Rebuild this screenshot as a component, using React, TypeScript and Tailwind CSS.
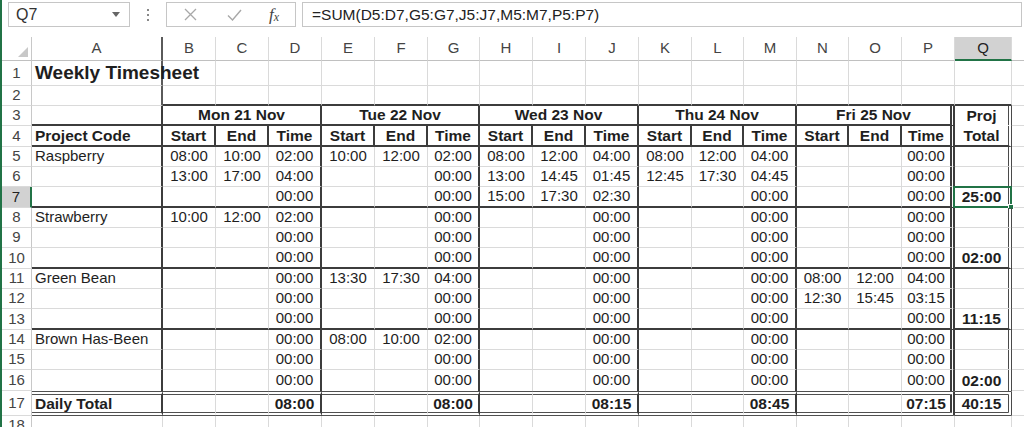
import React from "react";

const colW = [
  "w-[131px]",
  "w-[53px]",
  "w-[53px]",
  "w-[53px]",
  "w-[53px]",
  "w-[53px]",
  "w-[52px]",
  "w-[53px]",
  "w-[53px]",
  "w-[53px]",
  "w-[53px]",
  "w-[52px]",
  "w-[53px]",
  "w-[52px]",
  "w-[53px]",
  "w-[53px]",
  "w-[57px]",
];

const letters = ["A", "B", "C", "D", "E", "F", "G", "H", "I", "J", "K", "L", "M", "N", "O", "P", "Q"];

const rowH: Record<number, string> = {
  1: "h-[25px]",
  2: "h-[20px]",
  3: "h-[20px]",
  4: "h-[21px]",
  5: "h-[20px]",
  6: "h-[20px]",
  7: "h-[21px]",
  8: "h-[20px]",
  9: "h-[20px]",
  10: "h-[21px]",
  11: "h-[20px]",
  12: "h-[20px]",
  13: "h-[21px]",
  14: "h-[20px]",
  15: "h-[20px]",
  16: "h-[21px]",
  17: "h-[25px]",
  18: "h-[20px]",
};

const E = "";
const Z = "00:00";

const data: Record<number, string[]> = {
  1: ["Weekly Timesheet", E, E, E, E, E, E, E, E, E, E, E, E, E, E, E, E],
  2: Array(17).fill(E),
  4: ["Project Code", "Start", "End", "Time", "Start", "End", "Time", "Start", "End", "Time", "Start", "End", "Time", "Start", "End", "Time", "Total"],
  5: ["Raspberry", "08:00", "10:00", "02:00", "10:00", "12:00", "02:00", "08:00", "12:00", "04:00", "08:00", "12:00", "04:00", E, E, Z, E],
  6: [E, "13:00", "17:00", "04:00", E, E, Z, "13:00", "14:45", "01:45", "12:45", "17:30", "04:45", E, E, Z, E],
  7: [E, E, E, Z, E, E, Z, "15:00", "17:30", "02:30", E, E, Z, E, E, Z, "25:00"],
  8: ["Strawberry", "10:00", "12:00", "02:00", E, E, Z, E, E, Z, E, E, Z, E, E, Z, E],
  9: [E, E, E, Z, E, E, Z, E, E, Z, E, E, Z, E, E, Z, E],
  10: [E, E, E, Z, E, E, Z, E, E, Z, E, E, Z, E, E, Z, "02:00"],
  11: ["Green Bean", E, E, Z, "13:30", "17:30", "04:00", E, E, Z, E, E, Z, "08:00", "12:00", "04:00", E],
  12: [E, E, E, Z, E, E, Z, E, E, Z, E, E, Z, "12:30", "15:45", "03:15", E],
  13: [E, E, E, Z, E, E, Z, E, E, Z, E, E, Z, E, E, Z, "11:15"],
  14: ["Brown Has-Been", E, E, Z, "08:00", "10:00", "02:00", E, E, Z, E, E, Z, E, E, Z, E],
  15: [E, E, E, Z, E, E, Z, E, E, Z, E, E, Z, E, E, Z, E],
  16: [E, E, E, Z, E, E, Z, E, E, Z, E, E, Z, E, E, Z, "02:00"],
  17: ["Daily Total", E, E, "08:00", E, E, "08:00", E, E, "08:15", E, E, "08:45", E, E, "07:15", "40:15"],
  18: Array(17).fill(E),
};

const GR = "border-r border-r-[#dadada]";
const DR = "border-r-2 border-r-[#3c3c3c]";
const FR = "border-r-2 border-r-[#5a5a5a]";
const PR = "border-r-[5px] [border-right-style:double] border-r-[#3c3c3c]";
const QR = "border-r-[4px] [border-right-style:double] border-r-[#4a4a4a]";

const GB = "border-b border-b-[#dadada]";
const DB = "border-b-2 border-b-[#3c3c3c]";
const WB = "border-b border-b-white";
const NB = "border-b-0";
const DBL =
  "border-t-4 [border-top-style:double] border-t-[#505050] border-b-4 [border-bottom-style:double] border-b-[#505050]";

function rightCls(r: number, c: number): string {
  if (r === 1 || r === 2) return c === 0 ? FR : GR;
  if (r === 18) return GR;
  if (c === 0) return DR;
  if (c === 3 || c === 6 || c === 9 || c === 12) return DR;
  if (c === 15) return PR;
  if (c === 16) return QR;
  if (r === 4) return DR;
  return GR;
}

function bottomCls(r: number, c: number): string {
  if (r === 2) return c >= 1 ? DB : GB;
  if (r === 3) return c === 16 ? WB : DB;
  if (r === 4) return DB;
  if (r === 7 || r === 10 || r === 13) return DB;
  if (r === 16) return NB;
  if (r === 17) return DBL;
  return GB;
}

function RowHeader({ r }: { r: number }) {
  const sel = r === 7;
  return (
    <div
      className={
        "w-[30px] shrink-0 flex items-center justify-center text-[15px] border-b border-b-[#dadada] " +
        (sel
          ? "bg-[#d2d2d2] border-r-2 border-r-[#217346] text-[#222]"
          : "bg-white border-r border-r-[#c8c8c8] text-[#444]")
      }
    >
      {r}
    </div>
  );
}

function Selection() {
  return (
    <div className="pointer-events-none absolute -left-[2px] -top-[1px] -right-[4px] -bottom-[2px] border-2 border-[#217346]">
      <div className="absolute -right-[4px] -bottom-[4px] w-[6px] h-[6px] bg-[#217346] border border-white" />
    </div>
  );
}

function DataRow({ r }: { r: number }) {
  const row = data[r];
  const bold = r === 1 || r === 4 || r === 17;
  return (
    <div className={"flex " + rowH[r]}>
      <RowHeader r={r} />
      {row.map((v, c) => {
        const isA = c === 0;
        const b = bold || (c === 16 && v !== "");
        const size = r === 1 ? "text-[19px]" : b ? "text-[15.5px]" : "text-[15px]";
        return (
          <div
            key={c}
            className={
              "shrink-0 relative flex items-center px-[3px] whitespace-nowrap text-[#1e1e1e] " +
              colW[c] +
              " " +
              rightCls(r, c) +
              " " +
              bottomCls(r, c) +
              " " +
              (isA ? "justify-start " : "justify-center ") +
              size +
              (b ? " font-bold" : "")
            }
          >
            <span className={isA && r === 1 ? "relative z-10" : ""}>{v}</span>
            {r === 7 && c === 16 ? <Selection /> : null}
          </div>
        );
      })}
      <div className={"flex-1 " + GB} />
    </div>
  );
}

function HeaderRow3() {
  const groups = [
    { label: "Mon 21 Nov", w: "w-[159px]", r: DR },
    { label: "Tue 22 Nov", w: "w-[158px]", r: DR },
    { label: "Wed 23 Nov", w: "w-[159px]", r: DR },
    { label: "Thu 24 Nov", w: "w-[158px]", r: DR },
    { label: "Fri 25 Nov", w: "w-[158px]", r: PR },
  ];
  return (
    <div className={"flex " + rowH[3]}>
      <RowHeader r={3} />
      <div className={"shrink-0 w-[131px] " + DR + " " + DB} />
      {groups.map((g) => (
        <div
          key={g.label}
          className={
            "shrink-0 flex items-center justify-center text-[15.5px] font-bold text-[#1e1e1e] whitespace-nowrap " +
            g.w +
            " " +
            g.r +
            " " +
            DB
          }
        >
          {g.label}
        </div>
      ))}
      <div
        className={
          "shrink-0 w-[57px] flex items-center justify-center text-[15.5px] font-bold text-[#1e1e1e] " + QR + " " + WB
        }
      >
        Proj
      </div>
      <div className={"flex-1 " + GB} />
    </div>
  );
}

function ColumnHeader() {
  return (
    <div className="flex h-[24px]">
      <div className="w-[30px] shrink-0 flex items-end justify-end pr-[3px] pb-[3px] border-r border-r-[#c8c8c8] border-b border-b-[#c0c0c0]">
        <svg width="10" height="10" viewBox="0 0 10 10">
          <polygon points="10,0 10,10 0,10" fill="#c8c8c8" />
        </svg>
      </div>
      {letters.map((l, c) => {
        const sel = c === 16;
        return (
          <div
            key={l}
            className={
              "shrink-0 flex items-center justify-center text-[15px] " +
              colW[c] +
              " " +
              (c === 0 ? FR : "border-r border-r-[#dadada]") +
              " " +
              (sel
                ? "bg-[#d2d2d2] border-b-2 border-b-[#217346] text-[#222]"
                : "bg-white border-b border-b-[#c0c0c0] text-[#444]")
            }
          >
            {l}
          </div>
        );
      })}
      <div className="flex-1 border-b border-b-[#c0c0c0]" />
    </div>
  );
}

function FormulaBar() {
  return (
    <div className="flex items-start pt-[2px] h-[37px]">
      <div className="ml-[6px] w-[122px] h-[25px] border border-[#c6c6c6] flex items-center justify-between pl-[7px] pr-[9px] text-[16px] text-[#333]">
        <span>Q7</span>
        <svg width="8" height="5" viewBox="0 0 8 5">
          <polygon points="0,0 8,0 4,5" fill="#666" />
        </svg>
      </div>
      <div className="ml-[16px] w-[4px] h-[25px] flex flex-col items-center justify-center gap-[3px]">
        <div className="w-[2px] h-[2px] bg-[#888]" />
        <div className="w-[2px] h-[2px] bg-[#888]" />
        <div className="w-[2px] h-[2px] bg-[#888]" />
      </div>
      <div className="ml-[16px] w-[130px] h-[25px] border border-[#c6c6c6] flex items-center">
        <div className="w-[44px] flex justify-center ml-[1px]">
          <svg width="13" height="13" viewBox="0 0 13 13">
            <path d="M1 1 L12 12 M12 1 L1 12" stroke="#a8a8a8" strokeWidth="1.3" fill="none" />
          </svg>
        </div>
        <div className="w-[44px] flex justify-center">
          <svg width="15" height="12" viewBox="0 0 15 12">
            <path d="M1 6.5 L5.5 11 L14 1" stroke="#a8a8a8" strokeWidth="1.4" fill="none" />
          </svg>
        </div>
        <div className="w-[36px] flex justify-center font-['Liberation_Serif',serif] italic text-[17px] text-[#444] leading-none">
          <span>f</span>
          <span className="text-[12px] mt-[5px]">x</span>
        </div>
      </div>
      <div className="ml-[6px] flex-1 mr-[2px] h-[25px] border border-[#c6c6c6] flex items-center pl-[9px] text-[15.5px] text-[#222] whitespace-nowrap">
        =SUM(D5:D7,G5:G7,J5:J7,M5:M7,P5:P7)
      </div>
    </div>
  );
}

export default function App() {
  return (
    <div className="w-[1024px] h-[427px] overflow-hidden bg-white border-l-2 border-l-[#217346] font-['Liberation_Sans',Arial,sans-serif]">
      <FormulaBar />
      <ColumnHeader />
      <DataRow r={1} />
      <DataRow r={2} />
      <HeaderRow3 />
      {[4, 5, 6, 7, 8, 9, 10, 11, 12, 13, 14, 15, 16, 17, 18].map((r) => (
        <DataRow key={r} r={r} />
      ))}
    </div>
  );
}
